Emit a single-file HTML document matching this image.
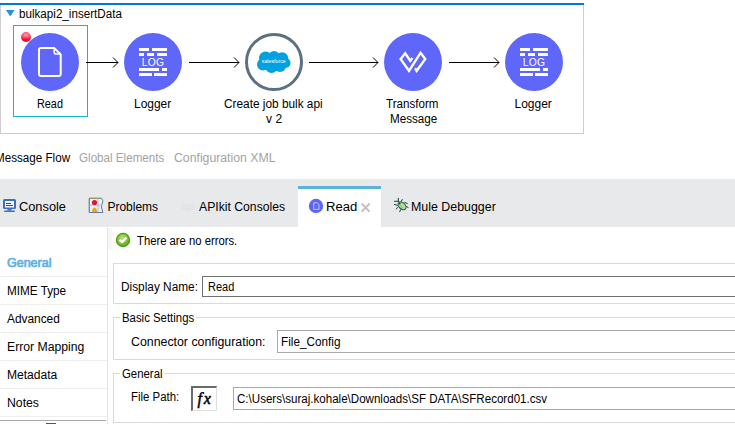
<!DOCTYPE html>
<html><head><meta charset="utf-8">
<style>
*{box-sizing:border-box;margin:0;padding:0}
html,body{width:735px;height:424px;overflow:hidden;background:#fff}
body{position:relative;font-family:"Liberation Sans",sans-serif;color:#000}
.a{position:absolute}
.t{position:absolute;white-space:pre;font-size:12px;line-height:12px;transform-origin:0 0}
.circ{position:absolute;width:58px;height:58px;border-radius:50%;background:#5f66fa;top:33px}
.arrow{position:absolute;height:1px;background:#000;top:62px}
.sep{position:absolute;left:0;width:107px;height:1px;background:#eeeeee}
.grp{position:absolute;left:113px;width:640px;border:1px solid #dadada}
.inp{position:absolute;border:1px solid #a9a9a9;background:#fff;width:600px}
</style></head>
<body>
<!-- flow panel -->
<div class="a" style="left:0;top:3px;width:584px;height:2px;background:#0078d7"></div>
<div class="a" style="left:0;top:5px;width:1px;height:129px;background:#cdcdcd"></div>
<div class="a" style="left:583px;top:5px;width:1px;height:129px;background:#cdcdcd"></div>
<div class="a" style="left:0;top:133px;width:584px;height:1px;background:#cdcdcd"></div>
<svg class="a" style="left:6px;top:10px" width="9" height="7"><path d="M0 0H8.5L4.25 6.5Z" fill="#1e90ee"/></svg>

<!-- selection box -->
<div class="a" style="left:13px;top:25px;width:75px;height:92px;border:1px solid #17b3cf"></div>

<!-- nodes -->
<div class="circ" style="left:21px"></div>
<div class="circ" style="left:124px"></div>
<div class="circ" style="left:245px;background:#fff;border:3px solid #5b7182"></div>
<div class="circ" style="left:384px"></div>
<div class="circ" style="left:505px"></div>

<!-- red dot -->
<div class="a" style="left:20.6px;top:31.9px;width:10px;height:10px;border-radius:50%;background:radial-gradient(ellipse 70% 45% at 50% 28%,#ff9fb4 0%,#ff4d72 60%,transparent 100%),linear-gradient(#ff5a7c 0%,#ff1a44 50%,#f00024 100%)"></div>

<!-- doc icon -->
<svg class="a" style="left:0;top:0" width="100" height="100">
<path d="M41 48H54.2L60.7 54.5V74a2 2 0 0 1-2 2H41a2 2 0 0 1-2-2V50a2 2 0 0 1 2-2Z" fill="none" stroke="#fff" stroke-width="2"/>
<path d="M54.2 48.5V52.5a1.5 1.5 0 0 0 1.5 1.5H60.5" fill="none" stroke="#fff" stroke-width="1.6"/>
</svg>

<!-- LOG icons -->
<svg class="a" style="left:139px;top:48px" width="29" height="29" viewBox="0 0 29 29">
<g fill="#fff">
<rect x="0" y="0" width="10" height="3"/><rect x="13" y="0" width="15" height="3"/>
<rect x="0" y="5" width="5" height="3"/><rect x="8" y="5" width="7" height="3"/><rect x="18" y="5" width="10" height="3"/>
<rect x="0" y="20" width="20" height="3"/><rect x="23" y="20" width="5" height="3"/>
<rect x="0" y="25" width="13" height="3"/><rect x="15" y="25" width="13" height="3"/>
</g>
<text x="14" y="17.6" text-anchor="middle" font-family="Liberation Sans" font-size="10.3" fill="#fff" letter-spacing="0.2">LOG</text>
</svg>
<svg class="a" style="left:520px;top:48px" width="29" height="29" viewBox="0 0 29 29">
<g fill="#fff">
<rect x="0" y="0" width="10" height="3"/><rect x="13" y="0" width="15" height="3"/>
<rect x="0" y="5" width="5" height="3"/><rect x="8" y="5" width="7" height="3"/><rect x="18" y="5" width="10" height="3"/>
<rect x="0" y="20" width="20" height="3"/><rect x="23" y="20" width="5" height="3"/>
<rect x="0" y="25" width="13" height="3"/><rect x="15" y="25" width="13" height="3"/>
</g>
<text x="14" y="17.6" text-anchor="middle" font-family="Liberation Sans" font-size="10.3" fill="#fff" letter-spacing="0.2">LOG</text>
</svg>

<!-- salesforce cloud -->
<svg class="a" style="left:256px;top:50px" width="36" height="25" viewBox="0 0 36 25">
<g fill="#00a1e0">
<circle cx="9.5" cy="8" r="6.5"/><circle cx="18" cy="6.8" r="5.8"/><circle cx="26" cy="8.5" r="6.3"/>
<circle cx="29.5" cy="13" r="5"/><circle cx="7" cy="14.5" r="6"/><circle cx="15.5" cy="16.5" r="6.5"/><circle cx="24" cy="16" r="6"/>
</g>
<text x="17.8" y="12.8" text-anchor="middle" font-family="Liberation Sans" font-size="5.6" fill="#fff" textLength="24" lengthAdjust="spacingAndGlyphs">salesforce</text>
</svg>

<!-- transform icon -->
<svg class="a" style="left:0;top:0" width="584" height="134">
<path transform="translate(413 61.8) scale(0.91) translate(-413 -61.8)" d="M412.3 57.6L410 60.9L404.5 52.4L399.4 58.8L408.6 71.7L421.3 51.9L426.5 58.8L417 71.7L415.2 68.9" fill="none" stroke="#fff" stroke-width="2.6" stroke-linejoin="miter"/>
<g fill="none" stroke="#000" stroke-width="1">
<path d="M113 57.5L118 62.5L113 67.5"/>
<path d="M234 57.5L239 62.5L234 67.5"/>
<path d="M373 57.5L378 62.5L373 67.5"/>
<path d="M494 57.5L499 62.5L494 67.5"/>
</g>
</svg>

<!-- arrows -->
<div class="arrow" style="left:86px;width:32px"></div>
<div class="arrow" style="left:189px;width:50px"></div>
<div class="arrow" style="left:309px;width:69px"></div>
<div class="arrow" style="left:449px;width:50px"></div>

<!-- view tab bar -->
<div class="a" style="left:0;top:179px;width:735px;height:48px;background:#e8e9eb"></div>
<div class="a" style="left:298px;top:186px;width:83px;height:41px;background:#fff"></div>
<div class="a" style="left:298px;top:186px;width:83px;height:3px;background:#5fb1dd"></div>

<!-- console icon -->
<svg class="a" style="left:0;top:195px" width="20" height="20">
<rect x="3" y="4" width="13" height="10" rx="1.5" fill="#3b6fc2"/>
<rect x="5" y="6" width="9" height="6.5" fill="#eef6ff"/>
<rect x="6" y="8" width="5" height="1" fill="#2a4f8f"/>
<rect x="6" y="10" width="7" height="1" fill="#2a4f8f"/>
<rect x="7.5" y="14" width="4" height="1.5" fill="#3b6fc2"/>
<rect x="4" y="15.5" width="11" height="1.5" rx="0.7" fill="#3b6fc2"/>
</svg>
<!-- problems icon -->
<svg class="a" style="left:86px;top:195px" width="20" height="20">
<path d="M3.3 3.3H15.5Q17.5 5 16.5 8Q15 10 15.5 12Q16 15 17 17.5H3.3Z" fill="#e4f1fb" stroke="#6a7a9a" stroke-width="1"/>
<path d="M3.3 3.3H15.5" stroke="#9a9a60" stroke-width="1"/>
<path d="M3.3 3.3V17.5" stroke="#8a8a60" stroke-width="1"/>
<path d="M12 3.5V17M3.5 10.2H16" stroke="#a8b8d8" stroke-width="0.9"/>
<circle cx="8.5" cy="7.5" r="2.6" fill="#e8102a"/>
<path d="M6 17Q6 13.2 8.5 12.6Q11 13.2 11 17Z" fill="#f7a600"/>
</svg>
<!-- read tab icon -->
<svg class="a" style="left:305px;top:195px" width="20" height="20">
<circle cx="11" cy="11" r="7.2" fill="#5f66fa"/>
<path d="M8.7 7.8H12.2L14 9.6V14.4H8.7Z" fill="none" stroke="#c0c4fa" stroke-width="1"/>
</svg>
<svg class="a" style="left:360px;top:202px" width="12" height="12">
<path d="M1.5 1.5L9.7 9.7M9.7 1.5L1.5 9.7" stroke="#c4c4c4" stroke-width="2"/>
</svg>
<!-- bug icon -->
<svg class="a" style="left:390px;top:194px" width="22" height="22">
<g stroke="#1e3a2a" stroke-width="1" fill="none">
<path d="M8.3 3.9V7.8M4.1 7.3H8.5"/>
<path d="M12.4 5.2L11.1 7.8"/>
<path d="M14.5 8.3L17.6 9.6"/>
<path d="M4.1 10.4L7.8 11.4"/>
<path d="M6.2 15.3L7.5 13.2"/>
<path d="M9.6 18.1L10.6 15.5"/>
<path d="M15.5 12.2L18.4 13.5"/>
</g>
<ellipse cx="12" cy="11.8" rx="3.1" ry="4.6" transform="rotate(-45 12 11.8)" fill="#b8e090" stroke="#24606e" stroke-width="1.1"/>
<path d="M9.6 10.8L13 14.2" stroke="#8cc060" stroke-width="1"/>
<circle cx="9.6" cy="9.4" r="1.1" fill="#2d5a20"/>
</svg>

<!-- content -->
<div class="a" style="left:107px;top:228px;width:1px;height:196px;background:#e4e4e4"></div>
<div class="a" style="left:108px;top:228px;width:4px;height:22px;background:#f6f6f6"></div>

<div class="sep" style="top:276px"></div>
<div class="sep" style="top:304px"></div>
<div class="sep" style="top:332px"></div>
<div class="sep" style="top:360px"></div>
<div class="sep" style="top:388px"></div>
<div class="sep" style="top:416px"></div>
<div class="a" style="left:0;top:420px;width:106px;height:1px;background:#a9a9a9"></div>
<div class="a" style="left:46px;top:423px;width:10px;height:1px;background:#555"></div>

<!-- green check -->
<svg class="a" style="left:110px;top:228px" width="26" height="24">
<defs><radialGradient id="gg" cx="45%" cy="35%" r="65%"><stop offset="0" stop-color="#b6e26a"/><stop offset="1" stop-color="#5ea91a"/></radialGradient></defs>
<circle cx="13" cy="12" r="6.6" fill="url(#gg)" stroke="#4f9a12" stroke-width="1.2"/>
<path d="M9.4 11.8L12 14.2L16.4 9.6" fill="none" stroke="#fff" stroke-width="2.4" stroke-linejoin="round"/>
</svg>

<div class="grp" style="top:263px;height:41px"></div>
<div class="inp" style="left:202px;top:276px;height:21px;border-color:#707070"></div>

<div class="grp" style="top:317px;height:43px"></div>
<div class="a" style="left:120px;top:310px;width:76px;height:14px;background:#fff"></div>
<div class="inp" style="left:277px;top:330px;height:23px"></div>

<div class="grp" style="top:373px;height:50px"></div>
<div class="a" style="left:120px;top:366px;width:44px;height:14px;background:#fff"></div>
<div class="a" style="left:191px;top:386px;width:26px;height:25px;border-top:2px solid #6a6a6a;border-left:2px solid #6a6a6a;border-right:1px solid #e0e0e0;border-bottom:1px solid #e0e0e0;background:#fff"></div>
<div class="t" style="left:197.5px;top:391px;font-family:'Liberation Serif',serif;font-style:italic;font-size:16px;line-height:16px;-webkit-text-stroke:0.5px #000;letter-spacing:1.8px">fx</div>
<div class="inp" style="left:233px;top:387px;height:23px"></div>
<div class="t" style="left:18.5px;top:8px;transform:scaleX(0.97);">bulkapi2_insertData</div>
<div class="t" style="left:37.0px;top:98px;transform:scaleX(0.904);">Read</div>
<div class="t" style="left:133.9px;top:98px;transform:scaleX(0.994);">Logger</div>
<div class="t" style="left:223.7px;top:98px;transform:scaleX(0.986);">Create job bulk api</div>
<div class="t" style="left:266.1px;top:113px;transform:scaleX(1.0);">v 2</div>
<div class="t" style="left:386.2px;top:98px;transform:scaleX(0.967);">Transform</div>
<div class="t" style="left:389.6px;top:113px;transform:scaleX(0.97);">Message</div>
<div class="t" style="left:514.5px;top:98px;transform:scaleX(1.0);">Logger</div>
<div class="t" style="left:-5.0px;top:152px;transform:scaleX(0.97);">Message Flow</div>
<div class="t" style="left:78.8px;top:152px;transform:scaleX(0.969);color:#a3a3a3">Global Elements</div>
<div class="t" style="left:173.9px;top:152px;transform:scaleX(1.021);color:#a3a3a3">Configuration XML</div>
<div class="t" style="left:18.8px;top:201px;transform:scaleX(1.067);">Console</div>
<div class="t" style="left:107.4px;top:201px;transform:scaleX(1.0);">Problems</div>
<div class="t" style="left:198.6px;top:201px;transform:scaleX(1.017);">APIkit Consoles</div>
<div class="t" style="left:181.5px;top:202px;transform:scaleX(1.0);color:#dfe0e2;font-size:10px;line-height:10px">api</div>
<div class="t" style="left:325.6px;top:201px;transform:scaleX(1.093);">Read</div>
<div class="t" style="left:411.0px;top:201px;transform:scaleX(1.033);">Mule Debugger</div>
<div class="t" style="left:136.5px;top:235px;transform:scaleX(0.939);">There are no errors.</div>
<div class="t" style="left:7.4px;top:257px;transform:scaleX(1.04);color:#5cb0e6;-webkit-text-stroke:0.7px #5cb0e6">General</div>
<div class="t" style="left:7.0px;top:285px;transform:scaleX(0.978);">MIME Type</div>
<div class="t" style="left:6.6px;top:313px;transform:scaleX(0.989);">Advanced</div>
<div class="t" style="left:7.0px;top:341px;transform:scaleX(1.018);">Error Mapping</div>
<div class="t" style="left:7.0px;top:369px;transform:scaleX(1.006);">Metadata</div>
<div class="t" style="left:7.0px;top:397px;transform:scaleX(1.02);">Notes</div>
<div class="t" style="left:120.8px;top:281px;transform:scaleX(0.986);">Display Name:</div>
<div class="t" style="left:207.8px;top:281px;transform:scaleX(0.915);">Read</div>
<div class="t" style="left:121.6px;top:312px;transform:scaleX(0.949);">Basic Settings</div>
<div class="t" style="left:130.8px;top:336px;transform:scaleX(1.029);">Connector configuration:</div>
<div class="t" style="left:280.6px;top:336px;transform:scaleX(0.98);">File_Config</div>
<div class="t" style="left:121.8px;top:368px;transform:scaleX(0.949);">General</div>
<div class="t" style="left:130.8px;top:391px;transform:scaleX(0.951);">File Path:</div>
<div class="t" style="left:237.1px;top:393px;transform:scaleX(0.964);">C:\Users\suraj.kohale\Downloads\SF DATA\SFRecord01.csv</div>
</body></html>
